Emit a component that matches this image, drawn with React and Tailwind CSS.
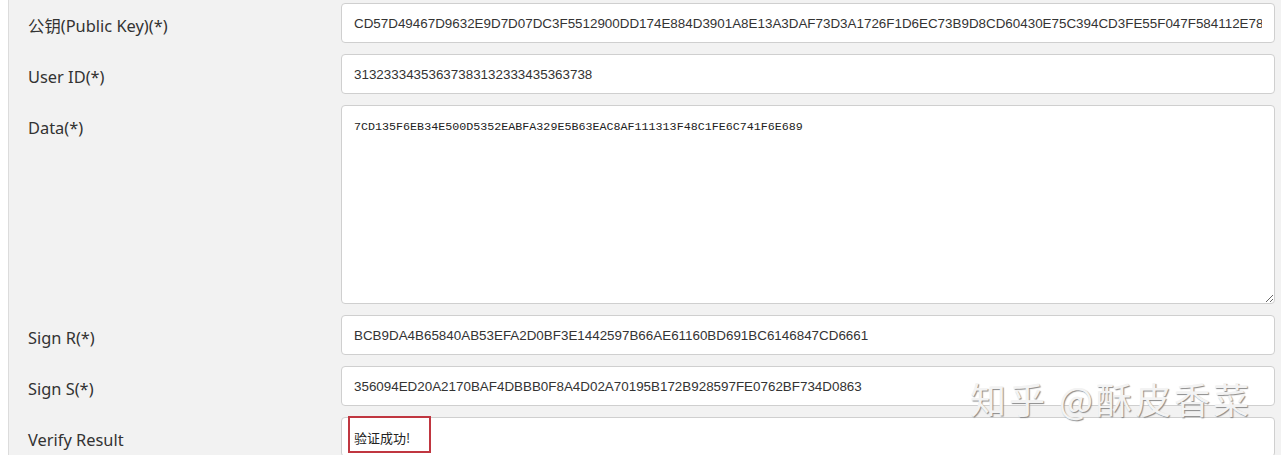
import React from 'react';

const fields = [
    {
        label: '公钥(Public Key)(*)',
        value: 'CD57D49467D9632E9D7D07DC3F5512900DD174E884D3901A8E13A3DAF73D3A1726F1D6EC73B9D8CD60430E75C394CD3FE55F047F584112E7876B4C2A9F01',
    },
    { label: 'User ID(*)', value: '31323334353637383132333435363738' },
];

const signs = [
    { label: 'Sign R(*)', value: 'BCB9DA4B65840AB53EFA2D0BF3E1442597B66AE61160BD691BC6146847CD6661' },
    { label: 'Sign S(*)', value: '356094ED20A2170BAF4DBBB0F8A4D02A70195B172B928597FE0762BF734D0863' },
];

const labelCls =
    "w-[332px] shrink-0 pl-[19px] pt-[13px] text-[16.4px] leading-[20px] text-[#333] font-['Noto_Sans','Noto_Sans_CJK_SC',sans-serif]";
const inputCls =
    "h-10 w-full min-w-0 rounded-[4px] border border-[#cfcfcf] bg-white px-3 text-[13.4px] text-[#333] outline-none font-['Liberation_Sans',Arial,sans-serif]";

function Row({ label, children }) {
    return (
        <div className="flex">
            <div className={labelCls}>{label}</div>
            <div className="flex-1 min-w-0">{children}</div>
        </div>
    );
}

export default function App() {
    return (
        <div className="relative flex h-[455px] w-full overflow-hidden bg-white">
            <div className="w-[8px] shrink-0 bg-white" />
            <div className="flex flex-1 flex-col gap-[11px] border-l border-[#dcdcdc] bg-[#f2f2f2] pr-[6px] pt-[3px]">
                {fields.map((f) => (
                    <Row key={f.label} label={f.label}>
                        <input readOnly value={f.value} className={inputCls} />
                    </Row>
                ))}

                <Row label="Data(*)">
                    <textarea
                        readOnly
                        value="7CD135F6EB34E500D5352EABFA329E5B63EAC8AF111313F48C1FE6C741F6E689"
                        className="block h-[199px] w-full rounded-[4px] border border-[#cfcfcf] bg-white px-3 pt-[13px] text-[11.7px] leading-[16px] text-[#222] outline-none font-['Liberation_Mono',monospace]"
                    />
                </Row>

                {signs.map((f) => (
                    <Row key={f.label} label={f.label}>
                        <input readOnly value={f.value} className={inputCls} />
                    </Row>
                ))}

                <Row label="Verify Result">
                    <div className="relative h-10 rounded-[4px] border border-[#cfcfcf] bg-white">
                        <span className="absolute left-[12px] top-[12px] text-[13px] leading-[16px] text-[#222] font-['Noto_Sans_CJK_SC',sans-serif]">
                            验证成功!
                        </span>
                        <div className="absolute left-[6px] top-[-2px] h-[37px] w-[83px] border-2 border-[#c03640]" />
                    </div>
                </Row>
            </div>

            {/* watermark */}
            <div className="pointer-events-none absolute left-[970px] top-[376px] whitespace-nowrap text-[36px] leading-[44px] tracking-[3px] text-[#f3f3f3] [text-shadow:1px_1px_1px_#8a8a8a] font-['Noto_Sans_CJK_SC',sans-serif]">
                知乎 @酥皮香菜
            </div>
        </div>
    );
}
